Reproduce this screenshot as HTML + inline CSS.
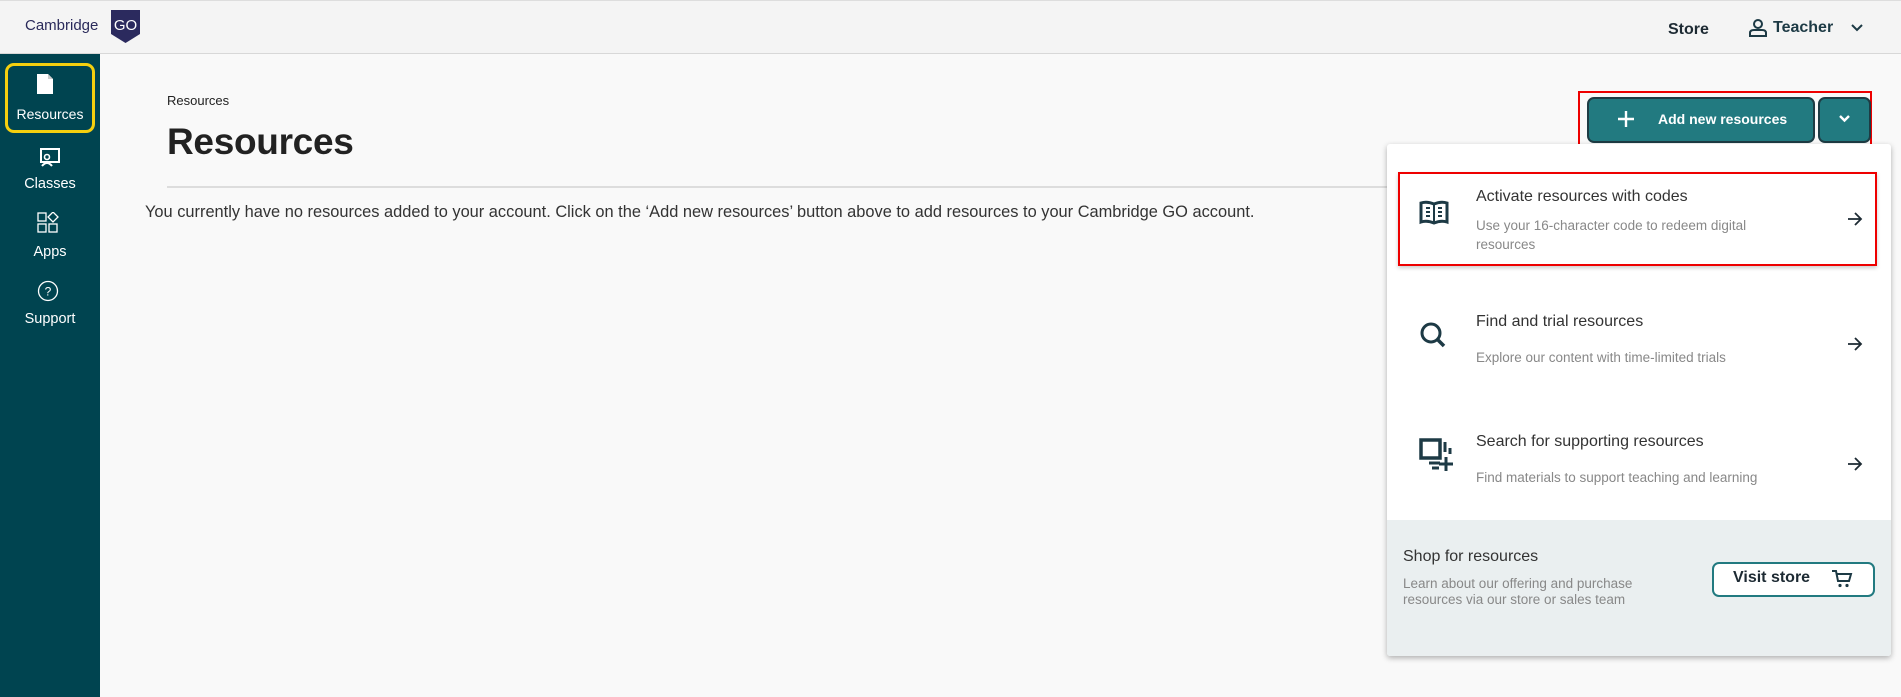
<!DOCTYPE html>
<html><head><meta charset="utf-8"><style>
*{margin:0;padding:0;box-sizing:border-box}
body{width:1901px;height:697px;overflow:hidden;background:#f9f9f9;font-family:"Liberation Sans",sans-serif;color:#222;position:relative}
.hdr{position:absolute;left:0;top:0;width:1901px;height:54px;background:#f4f4f4;border-bottom:1px solid #d8d8d8;border-top:1px solid #ddd}
.side{position:absolute;left:0;top:54px;width:100px;height:643px;background:#004450}
.nav{position:absolute;left:0;width:100px;text-align:center;color:#fff;font-size:14px}
.abs{position:absolute}
.panel{position:absolute;left:1387px;top:144px;width:504px;height:512px;background:#fff;box-shadow:0 2px 6px rgba(0,0,0,.3);border-radius:3px;overflow:hidden}
.t{position:absolute;font-size:16px;color:#333}
.s{position:absolute;font-size:13.5px;color:#888;line-height:19px}
.arr{position:absolute;left:460px}
</style></head><body>
<div class="hdr">
 <div class="abs" style="left:25px;top:16px;font-size:15px;color:#2a2a5a">Cambridge</div>
 <svg class="abs" style="left:111px;top:9px" width="29" height="34"><path d="M0 0H29V24L14.5 33L0 24Z" fill="#2b2a5e"/><text x="14.5" y="20" fill="#fff" font-size="15" text-anchor="middle" font-family="Liberation Sans">GO</text></svg>
 <div class="abs" style="left:1668px;top:20px;font-size:16px;font-weight:bold;color:#1d2a33">Store</div>
 <svg class="abs" style="left:1748px;top:17px" width="20" height="20"><circle cx="10" cy="6" r="4" fill="none" stroke="#1d3a45" stroke-width="2"/><path d="M2 18V15Q2 12 6 12H14Q18 12 18 15V18Z" fill="none" stroke="#1d3a45" stroke-width="2"/></svg>
 <div class="abs" style="left:1773px;top:18px;font-size:16px;font-weight:bold;color:#1d3a45">Teacher</div>
 <svg class="abs" style="left:1850px;top:22px" width="14" height="10"><path d="M2 2L7 7L12 2" fill="none" stroke="#1d3a45" stroke-width="2"/></svg>
</div>
<div class="side">
 <div class="abs" style="left:5px;top:9px;width:90px;height:70px;border:3px solid #f5d00f;border-radius:9px"></div>
 <svg class="abs" style="left:37px;top:20px" width="16" height="20"><path d="M0 0H11L16 5V20H0Z" fill="#fff"/><path d="M11 0V5H16" fill="#ccc"/></svg>
 <div class="nav" style="top:52px">Resources</div>
 <svg class="abs" style="left:39px;top:93px" width="22" height="22"><rect x="2" y="2" width="18" height="13" fill="none" stroke="#fff" stroke-width="2"/><circle cx="8" cy="10" r="2.5" fill="none" stroke="#fff" stroke-width="1.6"/><path d="M3 19Q8 13 13 19" fill="none" stroke="#fff" stroke-width="2"/></svg>
 <div class="nav" style="top:122px;font-size:14.5px">Classes</div>
 <svg class="abs" style="left:37px;top:158px" width="22" height="22"><rect x="1" y="1" width="8" height="8" fill="none" stroke="#fff" stroke-width="1.3"/><rect x="1" y="12" width="8" height="8" fill="none" stroke="#fff" stroke-width="1.3"/><rect x="12" y="12" width="8" height="8" fill="none" stroke="#fff" stroke-width="1.3"/><path d="M16 0L21 5L16 10L11 5Z" fill="none" stroke="#fff" stroke-width="1.3"/></svg>
 <div class="nav" style="top:190px;font-size:14.5px">Apps</div>
 <svg class="abs" style="left:37px;top:226px" width="22" height="22"><circle cx="11" cy="11" r="9.5" fill="none" stroke="#fff" stroke-width="1.3"/><text x="11" y="15.5" fill="#fff" font-size="12" text-anchor="middle">?</text></svg>
 <div class="nav" style="top:257px;font-size:14.5px">Support</div>
</div>
<div class="abs" style="left:167px;top:93px;font-size:13px;color:#222">Resources</div>
<div class="abs" style="left:167px;top:121px;font-size:37px;font-weight:bold;color:#222;letter-spacing:-0.3px">Resources</div>
<div class="abs" style="left:167px;top:186px;width:1230px;height:2px;background:#ddd"></div>
<div class="abs" style="left:145px;top:203px;font-size:16.4px;color:#333">You currently have no resources added to your account. Click on the ‘Add new resources’ button above to add resources to your Cambridge GO account.</div>

<div class="abs" style="left:1578px;top:91px;width:294px;height:61px;border:2px solid #e00"></div>
<div class="abs" style="left:1587px;top:97px;width:228px;height:46px;background:#227a80;border:2px solid #1e3c44;border-radius:7px"></div>
<svg class="abs" style="left:1617px;top:110px" width="18" height="18"><path d="M9 1V17M1 9H17" stroke="#fff" stroke-width="2.4"/></svg>
<div class="abs" style="left:1658px;top:111px;font-size:14px;font-weight:bold;color:#fff">Add new resources</div>
<div class="abs" style="left:1818px;top:97px;width:53px;height:46px;background:#227a80;border:2px solid #1e3c44;border-radius:7px"></div>
<svg class="abs" style="left:1838px;top:114px" width="13" height="10"><path d="M2 2L6.5 6.5L11 2" fill="none" stroke="#fff" stroke-width="2.4"/></svg>

<div class="panel">
 <div class="abs" style="left:11px;top:28px;width:479px;height:94px;border:2px solid #e00;box-shadow:0 2px 4px rgba(0,0,0,.2)"></div>
 <svg class="abs" style="left:32px;top:56px" width="30" height="26"><path d="M2 3Q8 1 15 4Q22 1 28 3V22Q22 20 15 23Q8 20 2 22Z" fill="none" stroke="#1d3a45" stroke-width="3"/><path d="M15 4V23" stroke="#1d3a45" stroke-width="2"/><path d="M7 8H11M7 12H11M7 16H11M19 8H23M19 12H23M19 16H23" stroke="#1d3a45" stroke-width="2"/></svg>
 <div class="t" style="left:89px;top:44px">Activate resources with codes</div>
 <div class="s" style="left:89px;top:72px">Use your 16-character code to redeem digital<br>resources</div>
 <svg class="arr" style="top:68px" width="16" height="14"><path d="M1 7H14M8 1L14 7L8 13" fill="none" stroke="#1d2a33" stroke-width="1.8"/></svg>

 <svg class="abs" style="left:32px;top:177px" width="28" height="28"><circle cx="12" cy="12" r="9" fill="none" stroke="#1d3a45" stroke-width="3"/><path d="M18 18L25 25" stroke="#1d3a45" stroke-width="3.5"/></svg>
 <div class="t" style="left:89px;top:169px">Find and trial resources</div>
 <div class="s" style="left:89px;top:204px">Explore our content with time-limited trials</div>
 <svg class="arr" style="top:193px" width="16" height="14"><path d="M1 7H14M8 1L14 7L8 13" fill="none" stroke="#1d2a33" stroke-width="1.8"/></svg>

 <svg class="abs" style="left:32px;top:294px" width="34" height="34"><rect x="2" y="2" width="19" height="18" fill="none" stroke="#1d3a45" stroke-width="3.5"/><path d="M26 4V14M31 10V16M10 25H21M13 30H20M27 19V33M20 26H34" stroke="#1d3a45" stroke-width="3"/></svg>
 <div class="t" style="left:89px;top:289px">Search for supporting resources</div>
 <div class="s" style="left:89px;top:324px">Find materials to support teaching and learning</div>
 <svg class="arr" style="top:313px" width="16" height="14"><path d="M1 7H14M8 1L14 7L8 13" fill="none" stroke="#1d2a33" stroke-width="1.8"/></svg>

 <div class="abs" style="left:0;top:376px;width:504px;height:136px;background:#eaeff0"></div>
 <div class="t" style="left:16px;top:404px;font-size:16px">Shop for resources</div>
 <div class="s" style="left:16px;top:432px;font-size:13.5px;line-height:16px">Learn about our offering and purchase<br>resources via our store or sales team</div>
 <div class="abs" style="left:325px;top:418px;width:163px;height:35px;border:2px solid #227a80;border-radius:7px;background:#fff"></div>
 <div class="abs" style="left:346px;top:425px;font-size:16px;font-weight:bold;color:#1d2a33">Visit store</div>
 <svg class="abs" style="left:444px;top:425px" width="22" height="20"><path d="M1 2H5L7 12H18L20 5H6" fill="none" stroke="#1d3a45" stroke-width="2"/><circle cx="9" cy="16.5" r="1.6" fill="#1d3a45"/><circle cx="16" cy="16.5" r="1.6" fill="#1d3a45"/></svg>
</div>
</body></html>
